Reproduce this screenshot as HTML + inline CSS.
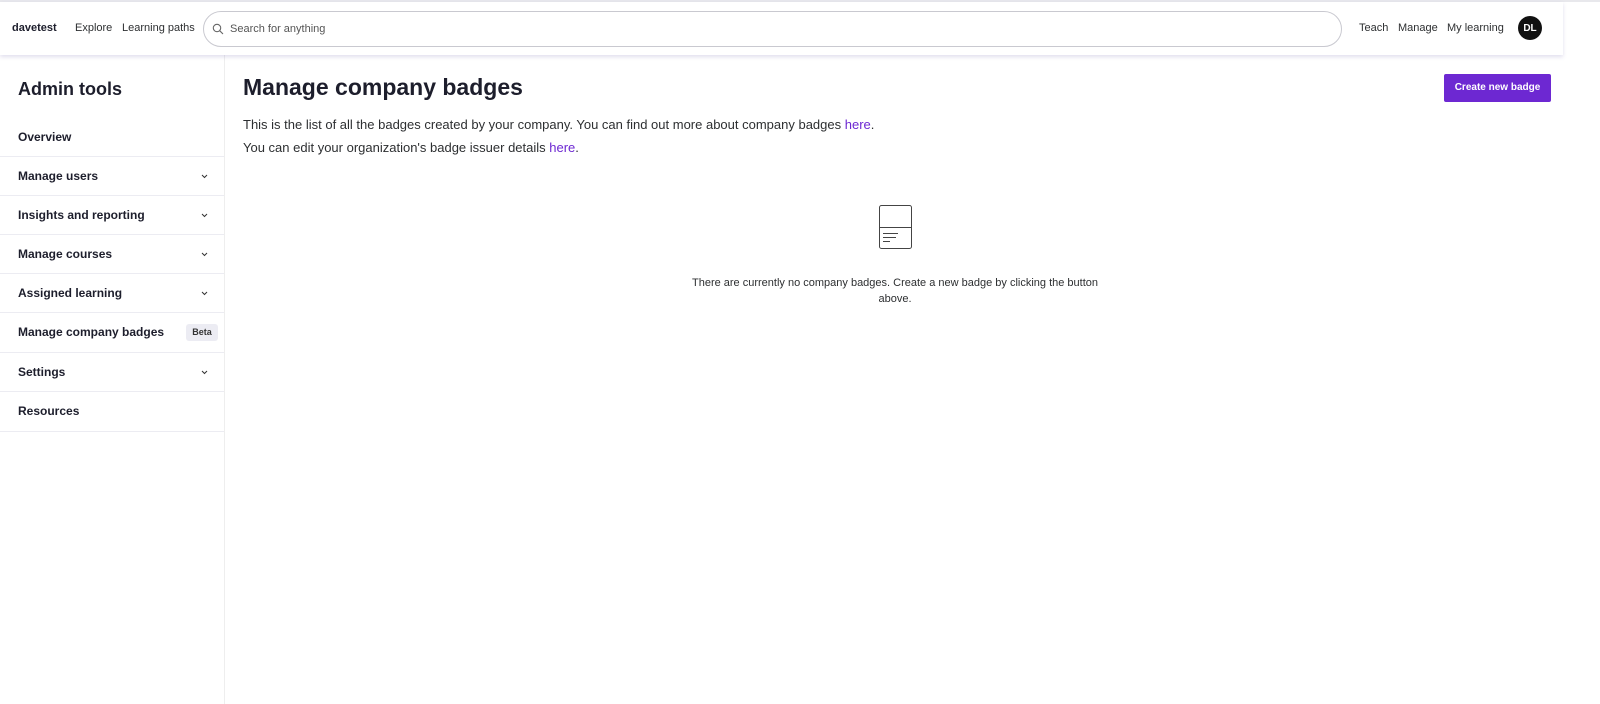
<!DOCTYPE html>
<html><head><meta charset="utf-8"><style>
*{box-sizing:border-box;margin:0;padding:0}
body{width:1600px;height:704px;overflow:hidden;background:#fff;font-family:"Liberation Sans",sans-serif;color:#1d1e2c;position:relative}
.top{position:absolute;left:0;top:0;width:1600px;height:2px;background:#e8e8ec}
.hdr{position:absolute;left:0;top:2px;width:1563px;height:53px;background:#fff;box-shadow:0 2px 4px rgba(90,80,160,.18);z-index:2}
.hdr span{position:absolute;top:20px;font-size:11px;color:#2d2f31}
.search{position:absolute;left:203px;top:9px;width:1139px;height:36px;border:1px solid #c9c9d0;border-radius:18px}
.search .ph{position:absolute;left:26px;top:11px;font-size:11px;color:#555}
.av{position:absolute;left:1518px;top:14px;width:24px;height:24px;border-radius:50%;background:#111;color:#fff;font-size:10px;font-weight:bold;display:flex;align-items:center;justify-content:center}
.side{position:absolute;left:0;top:55px;width:225px;height:649px;border-right:1px solid #eee}
.side h2{position:absolute;left:18px;top:24px;font-size:18px;font-weight:bold}
.row{position:absolute;left:0;width:224px;height:39px;border-bottom:1px solid #ececf2;font-size:12px;font-weight:bold;padding-left:18px;line-height:39px}
.row svg{position:absolute;right:16px;top:17px}
.beta{position:absolute;left:186px;top:11px;width:32px;height:17px;background:#ececf3;border-radius:3px;font-size:9px;line-height:17px;text-align:center;color:#333}
h1{position:absolute;left:243px;top:74px;font-size:23px;font-weight:bold}
.p{position:absolute;left:243px;font-size:13px;color:#2d2f31}
a{color:#6d28d2;text-decoration:none}
.btn{position:absolute;left:1444px;top:74px;width:107px;height:28px;background:#6d28d2;border-radius:2px;color:#fff;font-size:10px;font-weight:bold;text-align:center;line-height:28px}
.empty{position:absolute;left:660px;top:275px;width:470px;text-align:center;font-size:11px;line-height:16px;color:#2d2f31}
</style></head><body>
<div class="top"></div>
<div class="hdr">
<span style="left:12px;font-weight:bold;color:#1d1e2c">davetest</span>
<span style="left:75px">Explore</span>
<span style="left:122px">Learning paths</span>
<div class="search"><svg style="position:absolute;left:8px;top:11px" width="12" height="12" viewBox="0 0 12 12"><circle cx="5" cy="5" r="3.7" fill="none" stroke="#666" stroke-width="1.1"/><path d="M7.8 7.8L11 11" stroke="#666" stroke-width="1.1"/></svg><div class="ph">Search for anything</div></div>
<span style="left:1359px">Teach</span>
<span style="left:1398px">Manage</span>
<span style="left:1447px">My learning</span>
<div class="av">DL</div>
</div>
<div class="side">
<h2>Admin tools</h2>
<div class="row" style="top:63px">Overview</div>
<div class="row" style="top:102px">Manage users<svg width="7" height="5" viewBox="0 0 7 5"><path d="M1 1l2.5 2.5L6 1" fill="none" stroke="#333" stroke-width="1"/></svg></div>
<div class="row" style="top:141px">Insights and reporting<svg width="7" height="5" viewBox="0 0 7 5"><path d="M1 1l2.5 2.5L6 1" fill="none" stroke="#333" stroke-width="1"/></svg></div>
<div class="row" style="top:180px">Manage courses<svg width="7" height="5" viewBox="0 0 7 5"><path d="M1 1l2.5 2.5L6 1" fill="none" stroke="#333" stroke-width="1"/></svg></div>
<div class="row" style="top:219px">Assigned learning<svg width="7" height="5" viewBox="0 0 7 5"><path d="M1 1l2.5 2.5L6 1" fill="none" stroke="#333" stroke-width="1"/></svg></div>
<div class="row" style="top:258px;height:40px">Manage company badges<span class="beta">Beta</span></div>
<div class="row" style="top:298px">Settings<svg width="7" height="5" viewBox="0 0 7 5"><path d="M1 1l2.5 2.5L6 1" fill="none" stroke="#333" stroke-width="1"/></svg></div>
<div class="row" style="top:337px;height:40px">Resources</div>
</div>
<h1>Manage company badges</h1>
<div class="btn">Create new badge</div>
<div class="p" style="top:117px">This is the list of all the badges created by your company. You can find out more about company badges <a>here</a>.</div>
<div class="p" style="top:140px">You can edit your organization's badge issuer details <a>here</a>.</div>
<svg style="position:absolute;left:878px;top:204px" width="36" height="47" viewBox="0 0 36 47"><rect x="1.5" y="1.5" width="32" height="43" rx="2" fill="none" stroke="#444" stroke-width="1"/><path d="M1.5 23.5H33.5M5 29.5H20M5 33.5H18M5 37.5H12" stroke="#444" stroke-width="1"/></svg>
<div class="empty">There are currently no company badges. Create a new badge by clicking the button<br>above.</div>
</body></html>
